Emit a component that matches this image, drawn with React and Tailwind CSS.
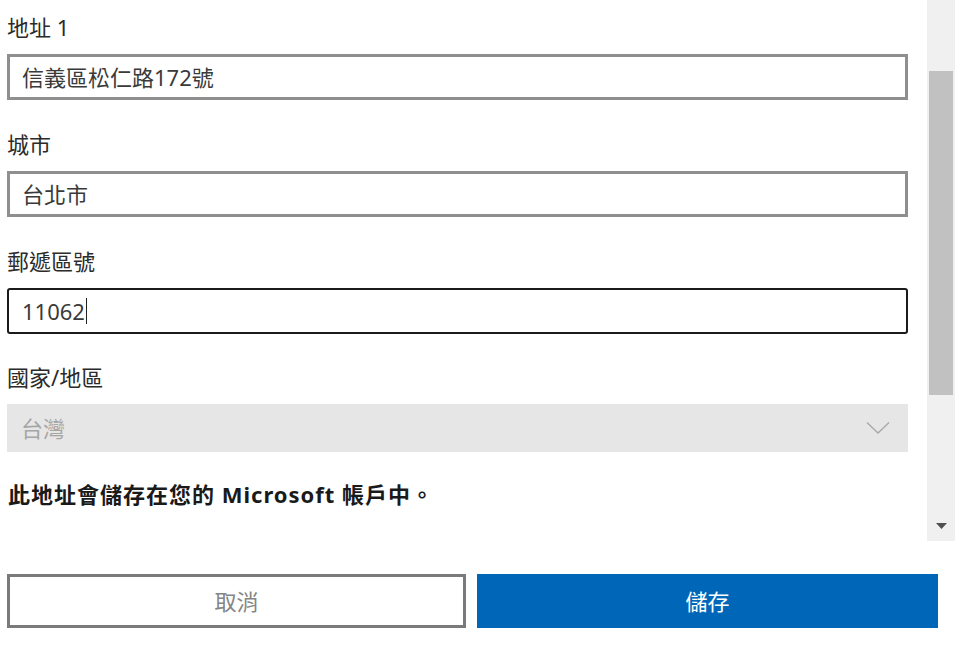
import { useState } from "react";

const font = { fontFamily: '"Noto Sans", "Noto Sans CJK TC", sans-serif' };

function Field({ label, value, focused }) {
  return (
    <div className="flex flex-col">
      <label className="h-[54px] flex items-center text-[22px] text-[#2b2b2b]">{label}</label>
      <div
        className={
          focused
            ? "h-[46px] w-[901px] flex items-center px-[13px] border-2 border-[#1b1b1b] rounded-[3px] bg-white"
            : "h-[46px] w-[901px] flex items-center px-3 border-[3px] border-[#8f8f8f] bg-white"
        }
      >
        <span className="text-[22px] text-[#3a3a3a]">{value}</span>
        {focused && <span className="w-px h-[26px] bg-[#222] ml-[1px]" />}
      </div>
    </div>
  );
}

export default function App() {
  const [country] = useState("台灣");

  return (
    <div className="w-[955px] h-[655px] bg-white flex flex-col" style={font}>
      {/* scrollable form area */}
      <div className="h-[541px] flex">
        <div className="flex-1 pl-[7px] flex flex-col">
          <Field label="地址 1" value="信義區松仁路172號" />
          <div className="h-[17px]" />
          <Field label="城市" value="台北市" />
          <div className="h-[17px]" />
          <Field label="郵遞區號" value="11062" focused />
          <div className="h-[17px]" />
          <div className="flex flex-col">
            <label className="h-[53px] flex items-center text-[22px] text-[#2b2b2b]">國家/地區</label>
            <div className="h-[48px] w-[901px] bg-[#e6e6e6] flex items-center justify-between pl-[14px] pr-[18px]">
              <span className="text-[22px] text-[#a6a6a6]">{country}</span>
              <svg width="24" height="14" viewBox="0 0 24 14" fill="none">
                <path d="M1 1.5 L12 12 L23 1.5" stroke="#a8a8a8" strokeWidth="1.3" />
              </svg>
            </div>
          </div>
          <p className="mt-[27px] text-[22px] font-bold tracking-[1px] text-[#1a1a1a] pl-[1px] leading-[30px]">
            此地址會儲存在您的 Microsoft 帳戶中。
          </p>
        </div>

        {/* scrollbar */}
        <div className="w-[28px] bg-[#f0f0f0] flex flex-col items-center">
          <div className="mt-[71px] w-[24px] h-[324px] bg-[#c1c1c1]" />
          <div className="flex-1" />
          <svg className="mb-[12px]" width="11" height="6" viewBox="0 0 11 6">
            <path d="M0 0 H11 L5.5 6 Z" fill="#505050" />
          </svg>
        </div>
      </div>

      {/* actions */}
      <div className="mt-[33px] pl-[7px] flex gap-[11px]">
        <button className="w-[459px] h-[54px] border-[3px] border-[#7a7a7a] bg-white text-[22px] text-[#858585]">
          取消
        </button>
        <button className="w-[461px] h-[54px] bg-[#0067b8] text-[22px] text-white">
          儲存
        </button>
      </div>
    </div>
  );
}
